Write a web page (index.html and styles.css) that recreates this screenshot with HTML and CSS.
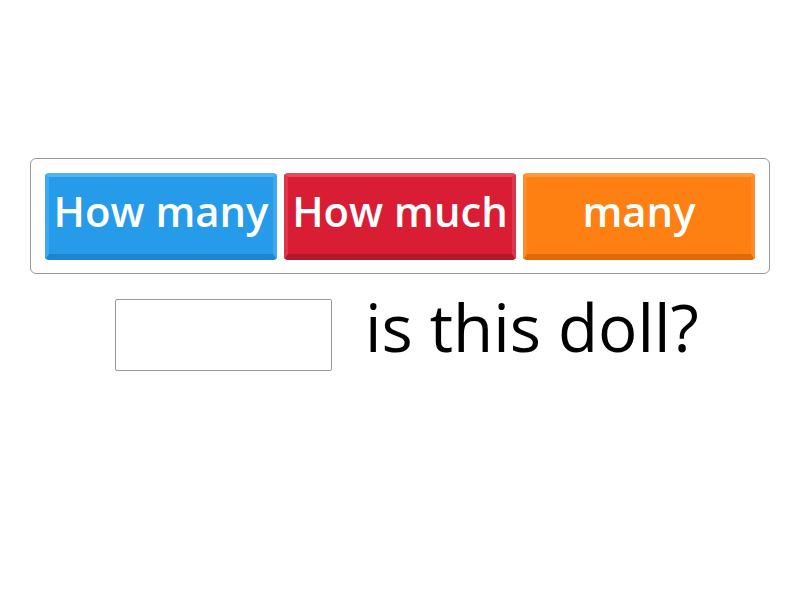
FILE: index.html
```html
<!DOCTYPE html>
<html>
<head>
<meta charset="utf-8">
<link rel="stylesheet" href="styles.css">
</head>
<body>
<div class="page">
  <div class="bank">
    <div class="tile blue">How many</div>
    <div class="tile red">How much</div>
    <div class="tile orange">many</div>
  </div>
  <div class="sentence">
    <div class="blank"></div>
    <span class="words">is this doll?</span>
  </div>
</div>
</body>
</html>
```
FILE: styles.css
```css
html, body {
  margin: 0;
  padding: 0;
  background: #fff;
  font-family: "Open Sans", "Noto Sans", sans-serif;
}
.page {
  padding-top: 158px;
  padding-left: 30px;
}
.bank {
  width: 740px;
  height: 116px;
  border: 1px solid #999;
  border-radius: 6px;
  box-sizing: border-box;
  padding: 14px 14px;
  display: flex;
  gap: 7px;
}
.tile {
  flex: 0 0 232px;
  height: 87px;
  box-sizing: border-box;
  border-radius: 4px;
  border-style: solid;
  border-width: 4px 4px 6px 4px;
  padding-bottom: 10px;
  color: #fff;
  font-weight: 600;
  font-size: 41.8px;
  display: flex;
  align-items: center;
  justify-content: center;
  white-space: nowrap;
}
.blue {
  background: #259be9;
  border-color: #53b3f0 #3ea9ee #1b85cf #3ea9ee;
}
.red {
  background: #d91d35;
  border-color: #e24a5e #dd364b #b4182c #dd364b;
}
.orange {
  background: #fe7f12;
  border-color: #ff9a40 #ff8c28 #df6a06 #ff8c28;
}
.sentence {
  display: flex;
  align-items: flex-start;
  margin-top: 25px;
  padding-left: 85px;
}
.blank {
  width: 217px;
  height: 72px;
  box-sizing: border-box;
  border: 1px solid #999;
  border-radius: 2px;
}
.words {
  margin-left: 33px;
  font-size: 65.5px;
  line-height: 56px;
  color: #000;
}
```
